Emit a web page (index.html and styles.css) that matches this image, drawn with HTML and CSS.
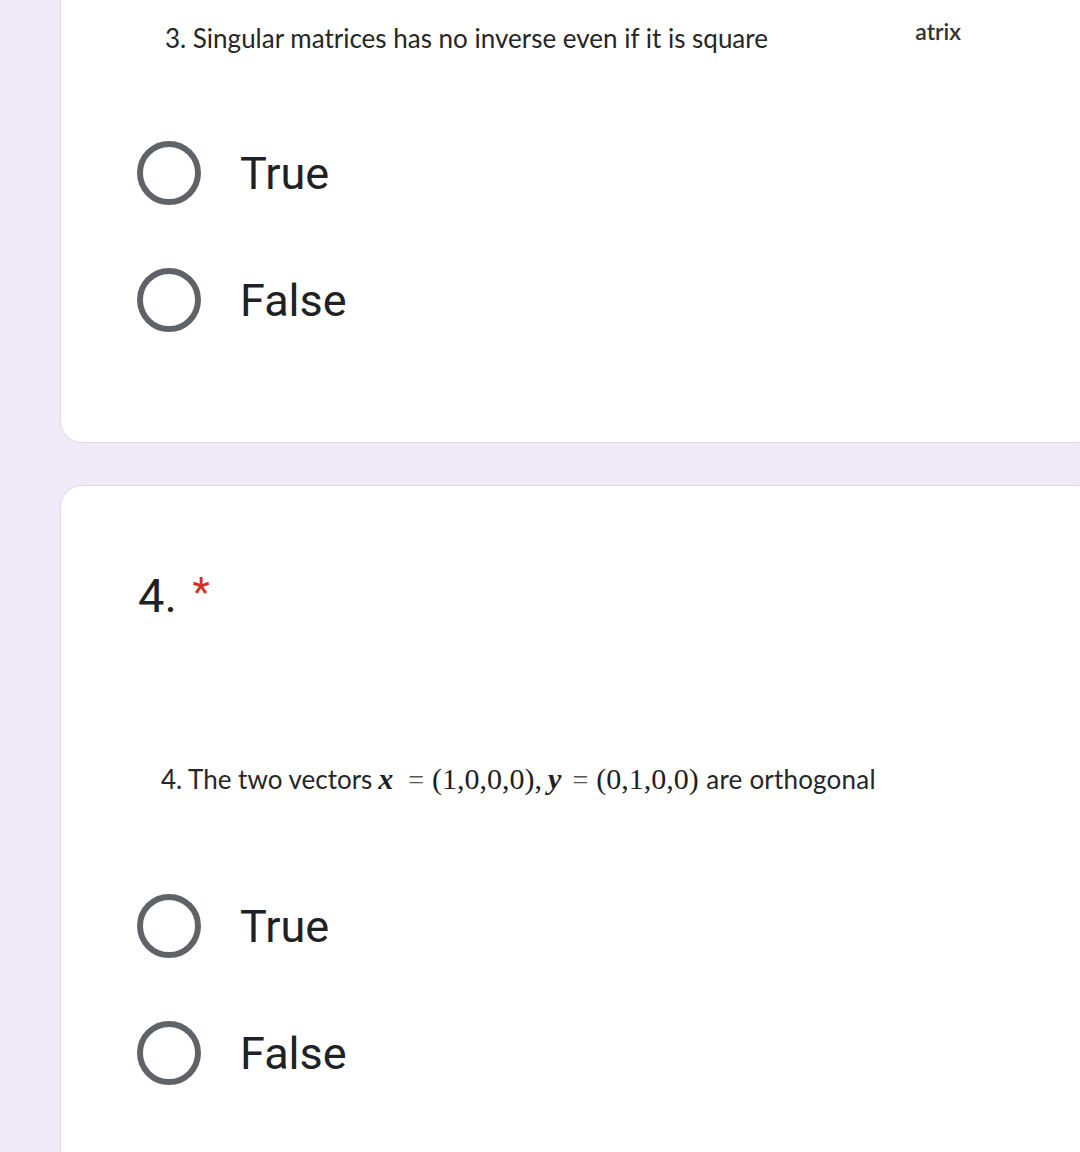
FILE: index.html
```html
<!DOCTYPE html>
<html>
<head>
<meta charset="utf-8">
<link rel="stylesheet" href="styles.css">
</head>
<body>
<div class="page">
  <div class="card card-first">
    <div class="q-image">
      <span class="q-text">3. Singular matrices has no inverse even if it is square</span>
      <span class="q-clip">atrix</span>
    </div>
    <div class="options">
      <div class="option"><span class="radio"></span><span class="label">True</span></div>
      <div class="option"><span class="radio"></span><span class="label">False</span></div>
    </div>
  </div>
  <div class="card card-second">
    <div class="q-title">4. <span class="req">*</span></div>
    <div class="q-image q-image-2">
      <span class="q-text">4. The two vectors<span class="math"><span class="mv">x</span><span class="eq">=</span>(1,0,0,0),<span class="mv mv-y">y</span><span class="eq eq-y">=</span>(0,1,0,0)</span> <span class="tail">are orthogonal</span></span>
    </div>
    <div class="options">
      <div class="option"><span class="radio"></span><span class="label">True</span></div>
      <div class="option"><span class="radio"></span><span class="label">False</span></div>
    </div>
  </div>
</div>
</body>
</html>
```

FILE: styles.css
```css
html, body {
  margin: 0;
  padding: 0;
  background: #eeeaf7;
  overflow: hidden;
}
.page {
  width: 1080px;
  height: 1152px;
  overflow: hidden;
  padding-left: 60px;
  box-sizing: border-box;
  display: flex;
  flex-direction: column;
  gap: 42px;
}
.card {
  background: #ffffff;
  border: 1px solid #dcdbe3;
  border-radius: 22px;
  width: 1040px;
  box-sizing: border-box;
  padding-left: 76px;
  flex-shrink: 0;
}
.card-first {
  margin-top: -40px;
  height: 483px;
  padding-top: 61px;
}
.card-second {
  height: 720px;
  padding-top: 86px;
}
.q-image {
  display: flex;
  align-items: flex-start;
  font-family: "Lato", "Open Sans", sans-serif;
  font-size: 26px;
  line-height: 32px;
  color: #262626;
  padding-left: 28px;
  width: 830px;
  box-sizing: border-box;
}
.q-clip {
  margin-left: auto;
  margin-top: -7px;
  margin-right: 6px;
  font-size: 23px;
  font-weight: 600;
  color: #333;
}
.math {
  font-family: "Liberation Serif", "DejaVu Serif", serif;
  font-size: 30px;
  color: #1f1f1f;
}
.mv {
  font-weight: bold;
  font-style: italic;
  margin-left: 6px;
}
.mv-y {
  margin-left: 6px;
}
.eq {
  color: #555;
  margin: 0 8px 0 15px;
  font-size: 28px;
}
.eq-y {
  margin-left: 11px;
}
.tail {
  letter-spacing: 0.2px;
  margin-left: 1px;
}
.options {
  display: flex;
  flex-direction: column;
  gap: 63px;
  margin-top: 87px;
}
.card-second .options {
  margin-top: 98px;
}
.option {
  display: flex;
  align-items: center;
  height: 64px;
}
.radio {
  width: 64px;
  height: 64px;
  box-sizing: border-box;
  border: 6px solid #5f6368;
  border-radius: 50%;
  flex-shrink: 0;
}
.label {
  font-family: Roboto, "Noto Sans", sans-serif;
  font-size: 45px;
  color: #202124;
  margin-left: 39px;
}
.q-title {
  font-family: Roboto, "Noto Sans", sans-serif;
  font-size: 47px;
  color: #202124;
  line-height: 1;
  margin-left: 1px;
}
.req {
  color: #d93025;
  font-size: 40px;
  vertical-align: 6px;
  margin-left: 4px;
}
.q-image-2 {
  margin-top: 144px;
  padding-left: 24px;
}
```
